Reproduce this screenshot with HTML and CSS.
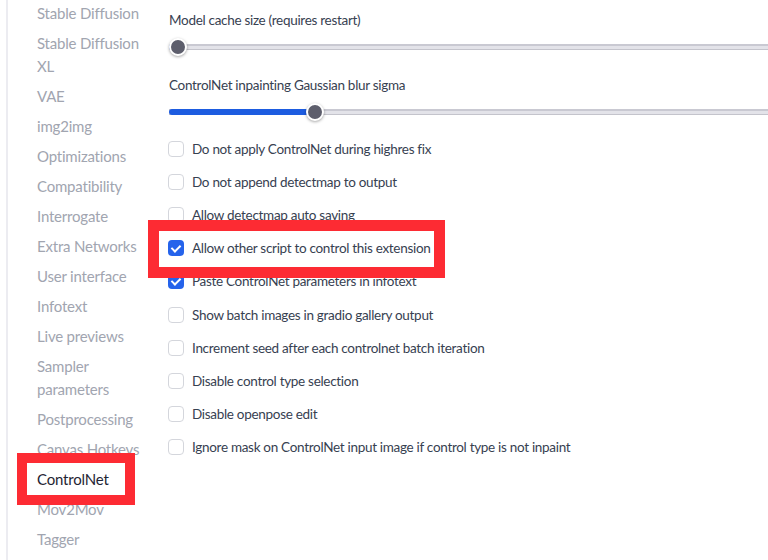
FILE: index.html
```html
<!DOCTYPE html>
<html lang="en">
<head>
  <meta charset="UTF-8" />
  <title>Settings - ControlNet</title>
  <link rel="stylesheet" href="styles.css">
</head>
<body>
  <div class="page">
    <nav class="sidebar">
      <div class="nav-item">Stable Diffusion</div>
      <div class="nav-item">Stable Diffusion XL</div>
      <div class="nav-item">VAE</div>
      <div class="nav-item">img2img</div>
      <div class="nav-item">Optimizations</div>
      <div class="nav-item">Compatibility</div>
      <div class="nav-item">Interrogate</div>
      <div class="nav-item">Extra Networks</div>
      <div class="nav-item">User interface</div>
      <div class="nav-item">Infotext</div>
      <div class="nav-item">Live previews</div>
      <div class="nav-item">Sampler parameters</div>
      <div class="nav-item">Postprocessing</div>
      <div class="nav-item">Canvas Hotkeys</div>
      <div class="nav-item active">ControlNet</div>
      <div class="nav-item">Mov2Mov</div>
      <div class="nav-item">Tagger</div>
    </nav>

    <main class="settings">
      <div class="slider-field">
        <label>Model cache size (requires restart)</label>
        <div class="slider">
          <div class="track"></div>
          <div class="fill" style="width: 9px"></div>
          <div class="thumb" style="left: 9px"></div>
        </div>
      </div>

      <div class="slider-field">
        <label>ControlNet inpainting Gaussian blur sigma</label>
        <div class="slider">
          <div class="track"></div>
          <div class="fill" style="width: 146px"></div>
          <div class="thumb" style="left: 146px"></div>
        </div>
      </div>

      <div class="checks">
        <label class="check"><span class="box"></span>Do not apply ControlNet during highres fix</label>
        <label class="check"><span class="box"></span>Do not append detectmap to output</label>
        <label class="check"><span class="box"></span>Allow detectmap auto saving</label>
        <label class="check"><span class="box checked"></span>Allow other script to control this extension</label>
        <label class="check"><span class="box checked"></span>Paste ControlNet parameters in infotext</label>
        <label class="check"><span class="box"></span>Show batch images in gradio gallery output</label>
        <label class="check"><span class="box"></span>Increment seed after each controlnet batch iteration</label>
        <label class="check"><span class="box"></span>Disable control type selection</label>
        <label class="check"><span class="box"></span>Disable openpose edit</label>
        <label class="check"><span class="box"></span>Ignore mask on ControlNet input image if control type is not inpaint</label>
      </div>
    </main>

    <div class="mark mark-nav"></div>
    <div class="mark mark-option"></div>
  </div>
</body>
</html>
```

FILE: styles.css
```css
body {
  margin: 0;
  font-family: Lato, "Noto Sans", sans-serif;
  background: white;
  overflow: hidden;
}

.page {
  position: relative;
  display: flex;
  height: 560px;
  margin-left: 6px;
  border-left: 2px solid #ececf1;
}

.sidebar {
  width: 132px;
  padding: 2px 0 0 29px;
  display: flex;
  flex-direction: column;
  gap: 7px;
  flex-shrink: 0;
}

.nav-item {
  font-size: 15px;
  line-height: 23px;
  letter-spacing: -0.2px;
  color: #a1a5b0;
  width: 108px;
}

.nav-item.active {
  color: #1f2433;
}

.settings {
  flex: 1;
  display: flex;
  flex-direction: column;
  padding: 10px 0 0 0;
  color: #374151;
  font-size: 13.5px;
  letter-spacing: -0.3px;
}

.slider-field label {
  display: block;
  line-height: 20px;
}

.slider-field + .slider-field {
  margin-top: 18px;
}

.slider {
  position: relative;
  height: 20px;
  margin-top: 7px;
}

.track {
  position: absolute;
  left: 0;
  right: -20px;
  top: 7px;
  height: 6px;
  box-sizing: border-box;
  border-top: 2px solid #c9c9d2;
  border-bottom: 1px solid #c4c4cc;
  background: #e3e3e9;
}

.fill {
  position: absolute;
  left: 0;
  top: 7px;
  height: 6px;
  border-radius: 3px;
  background: #1d5ce0;
}

.thumb {
  position: absolute;
  top: 1px;
  width: 14px;
  height: 14px;
  margin-left: -9px;
  border-radius: 50%;
  background: #5d5e6c;
  border: 2px solid white;
  box-shadow: 0 1px 3px rgba(0, 0, 0, 0.35);
}

.checks {
  display: flex;
  flex-direction: column;
  margin-top: 10px;
}

.check {
  display: flex;
  align-items: center;
  gap: 8px;
  height: 33.2px;
  line-height: 20px;
  margin-left: -1px;
}

.box {
  width: 16px;
  height: 16px;
  box-sizing: border-box;
  border: 1px solid #d4d6dc;
  border-radius: 4px;
  background: white;
  flex-shrink: 0;
}

.box.checked {
  border: none;
  background: #2563eb;
  position: relative;
}

.box.checked::after {
  content: "";
  position: absolute;
  left: 5px;
  top: 3px;
  width: 4px;
  height: 7px;
  border-right: 2px solid white;
  border-bottom: 2px solid white;
  transform: rotate(45deg);
}

.mark {
  position: absolute;
  border: 10px solid #fd2b33;
}

.mark-nav {
  left: 9px;
  top: 453px;
  width: 98px;
  height: 32px;
}

.mark-option {
  left: 140px;
  top: 220px;
  width: 275px;
  height: 36px;
  border-width: 11px;
}
```
